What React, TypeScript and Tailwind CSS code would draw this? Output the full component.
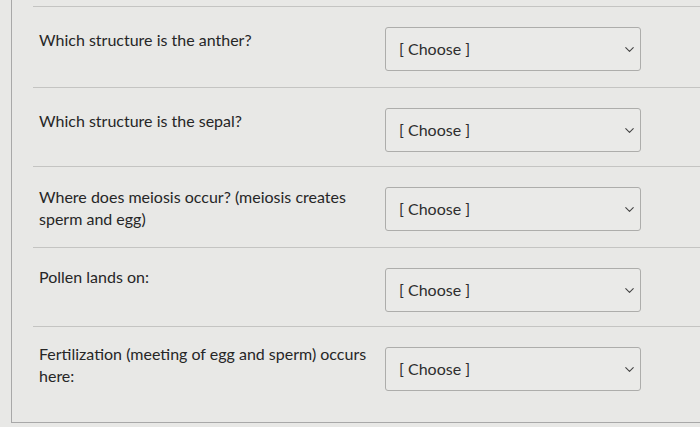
import { ChevronDown } from 'lucide-react';

const rows = [
  { q: 'Which structure is the anther?', h: 'h-[81px]', t: 'mt-[2px]' },
  { q: 'Which structure is the sepal?', h: 'h-[79px]', t: 'mt-[2px]' },
  { q: 'Where does meiosis occur? (meiosis creates sperm and egg)', h: 'h-[81px]', t: 'mt-[-1px]' },
  { q: 'Pollen lands on:', h: 'h-[79px]', t: 'mt-[-2px]' },
  { q: 'Fertilization (meeting of egg and sperm) occurs here:', h: 'h-[96px]', t: 'mt-[-4px]' },
];

export default function App() {
  return (
    <div className="w-[700px] h-[427px] overflow-hidden bg-[#e8e8e6] font-['Lato','Liberation_Sans',sans-serif] text-[#262626]">
      <div className="ml-[11px] h-[423px] border-l border-b border-[#a8a8a8] pt-[6px] pl-[21px]">
        {rows.map((r) => (
          <div key={r.q} className={`flex border-t border-[#c4c4c2] pl-[6px] pt-[20px] ${r.h}`}>
            <div className={`w-[346px] pr-[8px] text-[16px] leading-[22px] ${r.t}`}>{r.q}</div>
            <div className="flex h-[44px] w-[256px] items-center justify-between rounded-[3px] border border-[#adadab] bg-[#eaeae8] pl-[13px] pr-[3px]">
              <span className="text-[16px] text-[#2e2e2e]">[ Choose ]</span>
              <ChevronDown size={15} strokeWidth={1.75} className="text-[#444]" />
            </div>
          </div>
        ))}
      </div>
    </div>
  );
}
